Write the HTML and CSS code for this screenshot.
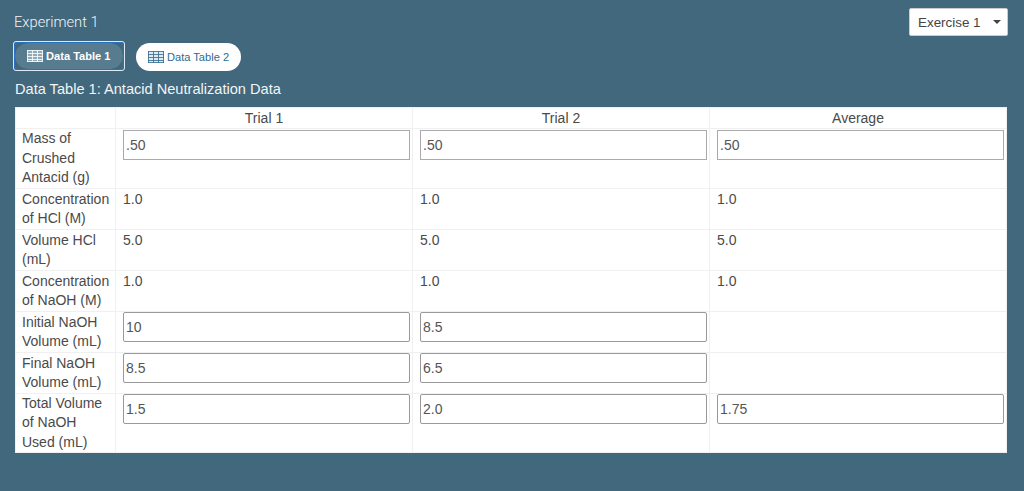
FILE: index.html
```html
<!DOCTYPE html>
<html lang="en">
  <head>
    <meta charset="UTF-8" />
    <meta name="viewport" content="width=device-width, initial-scale=1.0" />
    <title>Experiment 1</title>
    <link rel="stylesheet" href="styles.css">
  </head>
  <body>
    <div class="top-row">
      <h1 class="experiment-title">Experiment 1</h1>
      <button class="exercise-select" type="button">Exercise 1 <span class="caret"></span></button>
    </div>

    <div class="tabs">
      <button class="tab active" type="button">
        <svg class="table-icon" viewBox="0 0 16 12" width="16" height="12">
          <path d="M0 0h16v12H0z" fill="currentColor" opacity="0.35" />
          <path d="M0 .5h16M0 3.5h16M0 6.5h16M0 9.5h16M0 11.5h16M.5 0v12M5.5 0v12M10.5 0v12M15.5 0v12" stroke="currentColor" stroke-opacity="0.8" fill="none" />
        </svg>
        Data Table 1
      </button>
      <button class="tab" type="button">
        <svg class="table-icon" viewBox="0 0 16 12" width="16" height="12">
          <path d="M0 0h16v12H0z" fill="currentColor" opacity="0.15" />
          <path d="M0 .5h16M0 3.5h16M0 6.5h16M0 9.5h16M0 11.5h16M.5 0v12M5.5 0v12M10.5 0v12M15.5 0v12" stroke="currentColor" stroke-opacity="0.8" fill="none" />
        </svg>
        Data Table 2
      </button>
    </div>

    <h2 class="table-title">Data Table 1: Antacid Neutralization Data</h2>

    <table class="data-table">
      <thead>
        <tr>
          <th class="label-col"></th>
          <th>Trial 1</th>
          <th>Trial 2</th>
          <th>Average</th>
        </tr>
      </thead>
      <tbody>
        <tr>
          <td class="tall-label">Mass of Crushed Antacid (g)</td>
          <td class="input-cell first-row"><input class="square" type="text" value=".50" /></td>
          <td class="input-cell first-row"><input class="square" type="text" value=".50" /></td>
          <td class="input-cell first-row"><input class="square" type="text" value=".50" /></td>
        </tr>
        <tr>
          <td>Concentration of HCl (M)</td>
          <td>1.0</td>
          <td>1.0</td>
          <td>1.0</td>
        </tr>
        <tr>
          <td>Volume HCl (mL)</td>
          <td>5.0</td>
          <td>5.0</td>
          <td>5.0</td>
        </tr>
        <tr>
          <td>Concentration of NaOH (M)</td>
          <td>1.0</td>
          <td>1.0</td>
          <td>1.0</td>
        </tr>
        <tr>
          <td>Initial NaOH Volume (mL)</td>
          <td class="input-cell"><input type="text" value="10" /></td>
          <td class="input-cell"><input type="text" value="8.5" /></td>
          <td></td>
        </tr>
        <tr>
          <td>Final NaOH Volume (mL)</td>
          <td class="input-cell"><input type="text" value="8.5" /></td>
          <td class="input-cell"><input type="text" value="6.5" /></td>
          <td></td>
        </tr>
        <tr>
          <td class="tall-label">Total Volume of NaOH Used (mL)</td>
          <td class="input-cell"><input type="text" value="1.5" /></td>
          <td class="input-cell"><input type="text" value="2.0" /></td>
          <td class="input-cell"><input type="text" value="1.75" /></td>
        </tr>
      </tbody>
    </table>
  </body>
</html>
```

FILE: styles.css
```css
body {
  margin: 0;
  height: 491px;
  padding: 8px 16px 0 15px;
  box-sizing: border-box;
  overflow: hidden;
  background-color: #41687c;
  font-family: "Liberation Sans", Arial, sans-serif;
  color: #4a4a4a;
}

.top-row {
  display: flex;
  justify-content: space-between;
  align-items: flex-start;
  height: 33px;
}

.experiment-title {
  margin: 0 0 0 -1px;
  padding-top: 5px;
  font-family: Roboto, "Liberation Sans", sans-serif;
  font-size: 14.7px;
  font-weight: 300;
  line-height: 18px;
  color: #f1f4f6;
}

.exercise-select {
  width: 99px;
  height: 28px;
  padding: 0 0 0 8px;
  display: flex;
  align-items: center;
  background-color: #fff;
  border: 1px solid #ccc;
  border-radius: 2px;
  font-family: inherit;
  font-size: 13.4px;
  color: #444;
}

.caret {
  margin-left: 12px;
  border-top: 4px solid #444;
  border-left: 4px solid transparent;
  border-right: 4px solid transparent;
}

.tabs {
  display: flex;
  align-items: center;
  height: 31px;
  margin-left: -2px;
  gap: 11px;
}

.tab {
  display: flex;
  align-items: center;
  gap: 3px;
  height: 28px;
  padding: 0 12px;
  background-color: #fff;
  border: 0;
  border-radius: 14px;
  font-family: inherit;
  font-size: 11.1px;
  white-space: nowrap;
  color: #2f6a8f;
}

.tab.active {
  position: relative;
  align-self: flex-start;
  height: 30px;
  width: 112px;
  padding: 0 0 0 12px;
  background-color: #587c8f;
  background-clip: padding-box;
  border: 2px solid #41687c;
  border-radius: 16px;
  font-weight: bold;
  color: #fff;
}

/* focus ring stays square while the pill is round */
.tab.active::after {
  content: "";
  position: absolute;
  inset: -2px;
  border: 1px solid #dce8f6;
  border-radius: 3px;
  box-shadow: inset 0 0 0 1px #2a6fc0;
}

.table-icon {
  flex: none;
}

.table-title {
  margin: 7px 0 8px;
  font-size: 14.6px;
  font-weight: normal;
  line-height: 20px;
  color: #f3f5f7;
}

.data-table {
  width: 992px;
  table-layout: fixed;
  border-collapse: collapse;
  background-color: #fff;
  font-size: 14px;
  line-height: 19.5px;
}

.data-table th,
.data-table td {
  box-sizing: border-box;
  padding: 1px 3px 0 7px;
  border: 1px solid #f0f0f0;
  vertical-align: top;
}

.data-table th {
  padding: 1px 3px 0;
  line-height: 19px;
  font-weight: normal;
  text-align: center;
}

.data-table td:first-child {
  padding-left: 6px;
}

.data-table td.tall-label {
  padding-top: 0;
}

.label-col {
  width: 100px;
}

.data-table td.input-cell {
  padding: 0 2px 0 7px;
}

.data-table td.first-row {
  padding-top: 1px;
}

.data-table input {
  display: block;
  width: 100%;
  height: 30px;
  padding: 0 2px;
  box-sizing: border-box;
  border: 1px solid #999;
  border-radius: 2px;
  font-family: inherit;
  font-size: 14px;
  color: #555;
}

.data-table input.square {
  border-color: #aaa;
  border-radius: 0;
}
```
